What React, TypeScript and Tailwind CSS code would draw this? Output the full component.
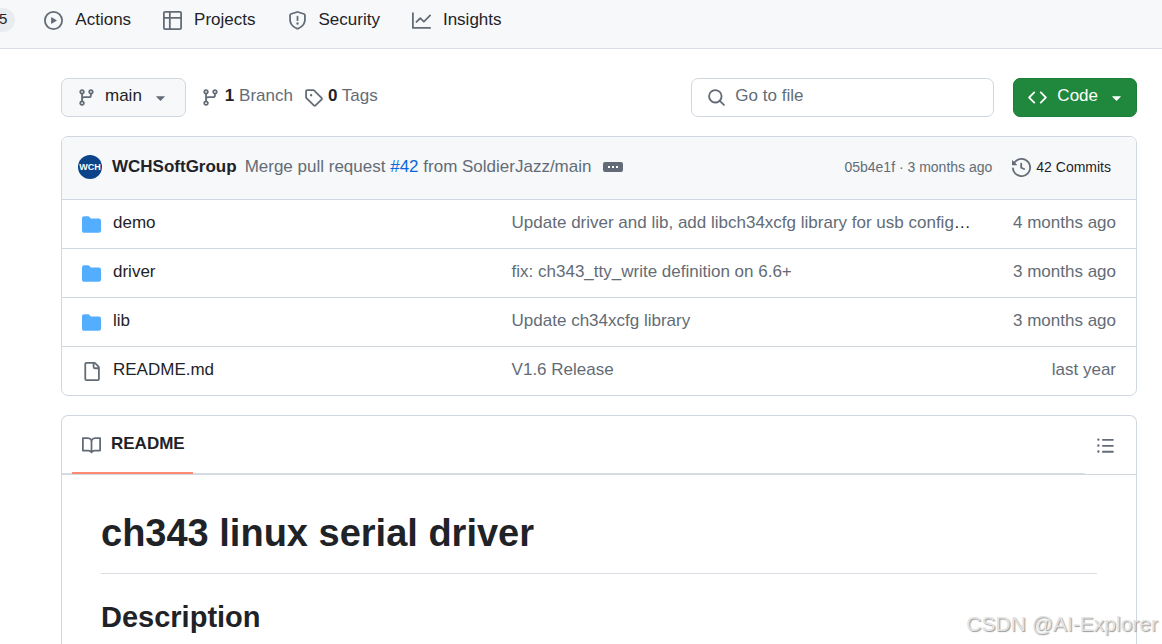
import clsx from 'clsx'

const paths = {
  play: 'M8 0a8 8 0 1 1 0 16A8 8 0 0 1 8 0ZM1.5 8a6.5 6.5 0 1 0 13 0 6.5 6.5 0 0 0-13 0Zm4.879-2.773 4.264 2.559a.25.25 0 0 1 0 .428l-4.264 2.559A.25.25 0 0 1 6 10.559V5.442a.25.25 0 0 1 .379-.215Z',
  table: 'M0 1.75C0 .784.784 0 1.75 0h12.5C15.216 0 16 .784 16 1.75v12.5A1.75 1.75 0 0 1 14.25 16H1.75A1.75 1.75 0 0 1 0 14.25ZM6.5 6.5v8h7.75a.25.25 0 0 0 .25-.25V6.5Zm8-1.5V1.75a.25.25 0 0 0-.25-.25H6.5V5Zm-13 1.5v7.75c0 .138.112.25.25.25H5v-8ZM5 5V1.5H1.75a.25.25 0 0 0-.25.25V5Z',
  shield: 'M7.467.133a1.748 1.748 0 0 1 1.066 0l5.25 1.68A1.75 1.75 0 0 1 15 3.48V7c0 1.566-.32 3.182-1.303 4.682-.983 1.498-2.585 2.813-5.032 3.855a1.697 1.697 0 0 1-1.33 0c-2.447-1.042-4.049-2.357-5.032-3.855C1.32 10.182 1 8.566 1 7V3.48a1.75 1.75 0 0 1 1.217-1.667Zm.61 1.429a.25.25 0 0 0-.153 0l-5.25 1.68a.25.25 0 0 0-.174.238V7c0 1.358.275 2.666 1.057 3.86.784 1.194 2.121 2.34 4.366 3.297a.196.196 0 0 0 .154 0c2.245-.956 3.582-2.104 4.366-3.298C13.225 9.666 13.5 8.36 13.5 7V3.48a.251.251 0 0 0-.174-.237l-5.25-1.68ZM8.75 4.75v3a.75.75 0 0 1-1.5 0v-3a.75.75 0 0 1 1.5 0ZM9 10.5a1 1 0 1 1-2 0 1 1 0 0 1 2 0Z',
  graph: 'M1.5 1.75V13.5h13.75a.75.75 0 0 1 0 1.5H.75a.75.75 0 0 1-.75-.75V1.75a.75.75 0 0 1 1.5 0Zm14.28 2.53-5.25 5.25a.75.75 0 0 1-1.06 0L7 7.06 4.28 9.78a.751.751 0 0 1-1.042-.018.751.751 0 0 1-.018-1.042l3.25-3.25a.75.75 0 0 1 1.06 0L10 7.94l4.72-4.72a.751.751 0 0 1 1.042.018.751.751 0 0 1 .018 1.042Z',
  branch: 'M9.5 3.25a2.25 2.25 0 1 1 3 2.122V6A2.5 2.5 0 0 1 10 8.5H6a1 1 0 0 0-1 1v1.128a2.251 2.251 0 1 1-1.5 0V5.372a2.25 2.25 0 1 1 1.5 0v1.836A2.493 2.493 0 0 1 6 7h4a1 1 0 0 0 1-1v-.628A2.25 2.25 0 0 1 9.5 3.25Zm-6 0a.75.75 0 1 0 1.5 0 .75.75 0 0 0-1.5 0Zm8.25-.75a.75.75 0 1 0 0 1.5.75.75 0 0 0 0-1.5ZM4.25 12a.75.75 0 1 0 0 1.5.75.75 0 0 0 0-1.5Z',
  triangle: 'm4.427 7.427 3.396 3.396a.25.25 0 0 0 .354 0l3.396-3.396A.25.25 0 0 0 11.396 7H4.604a.25.25 0 0 0-.177.427Z',
  tag: 'M1 7.775V2.75C1 1.784 1.784 1 2.75 1h5.025c.464 0 .91.184 1.238.513l6.25 6.25a1.75 1.75 0 0 1 0 2.474l-5.026 5.026a1.75 1.75 0 0 1-2.474 0l-6.25-6.25A1.752 1.752 0 0 1 1 7.775Zm1.5 0c0 .066.026.13.073.177l6.25 6.25a.25.25 0 0 0 .354 0l5.025-5.025a.25.25 0 0 0 0-.354l-6.25-6.25a.25.25 0 0 0-.177-.073H2.75a.25.25 0 0 0-.25.25ZM6 5a1 1 0 1 1 0 2 1 1 0 0 1 0-2Z',
  search: 'M10.68 11.74a6 6 0 0 1-7.922-8.982 6 6 0 0 1 8.982 7.922l3.04 3.04a.749.749 0 0 1-.326 1.275.749.749 0 0 1-.734-.215ZM11.5 7a4.499 4.499 0 1 0-8.997 0A4.499 4.499 0 0 0 11.5 7Z',
  code: 'm11.28 3.22 4.25 4.25a.75.75 0 0 1 0 1.06l-4.25 4.25a.749.749 0 0 1-1.275-.326.749.749 0 0 1 .215-.734L13.94 8l-3.72-3.72a.749.749 0 0 1 .326-1.275.749.749 0 0 1 .734.215Zm-6.56 0a.751.751 0 0 1 1.042.018.751.751 0 0 1 .018 1.042L2.06 8l3.72 3.72a.749.749 0 0 1-.326 1.275.749.749 0 0 1-.734-.215L.47 8.53a.75.75 0 0 1 0-1.06Z',
  history: 'm.427 1.927 1.215 1.215a8.002 8.002 0 1 1-1.6 5.685.75.75 0 1 1 1.493-.154 6.5 6.5 0 1 0 1.18-4.458l1.358 1.358A.25.25 0 0 1 3.896 6H.25A.25.25 0 0 1 0 5.75V2.104a.25.25 0 0 1 .427-.177ZM7.75 4a.75.75 0 0 1 .75.75v2.992l2.028.812a.75.75 0 0 1-.557 1.392l-2.5-1A.751.751 0 0 1 7 8.25v-3.5A.75.75 0 0 1 7.75 4Z',
  folder: 'M1.75 1A1.75 1.75 0 0 0 0 2.75v10.5C0 14.216.784 15 1.75 15h12.5A1.75 1.75 0 0 0 16 13.25v-8.5A1.75 1.75 0 0 0 14.25 3H7.5a.25.25 0 0 1-.2-.1l-.9-1.2C6.07 1.26 5.55 1 5 1H1.75Z',
  file: 'M2 1.75C2 .784 2.784 0 3.75 0h6.586c.464 0 .909.184 1.237.513l2.914 2.914c.329.328.513.773.513 1.237v9.586A1.75 1.75 0 0 1 13.25 16h-9.5A1.75 1.75 0 0 1 2 14.25Zm1.75-.25a.25.25 0 0 0-.25.25v12.5c0 .138.112.25.25.25h9.5a.25.25 0 0 0 .25-.25V6h-2.75A1.75 1.75 0 0 1 9 4.25V1.5Zm6.75.062V4.25c0 .138.112.25.25.25h2.688l-.011-.013-2.914-2.914-.013-.011Z',
  book: 'M0 1.75A.75.75 0 0 1 .75 1h4.253c1.227 0 2.317.59 3 1.501A3.743 3.743 0 0 1 11.006 1h4.245a.75.75 0 0 1 .75.75v10.5a.75.75 0 0 1-.75.75h-4.507a2.25 2.25 0 0 0-1.591.659l-.622.621a.75.75 0 0 1-1.06 0l-.622-.621A2.25 2.25 0 0 0 5.258 13H.75a.75.75 0 0 1-.75-.75Zm7.251 10.324.004-5.073-.002-2.253A2.25 2.25 0 0 0 5.003 2.5H1.5v9h3.757a3.75 3.75 0 0 1 1.994.574ZM8.755 4.75l-.004 7.322a3.752 3.752 0 0 1 1.992-.572H14.5v-9h-3.495a2.25 2.25 0 0 0-2.25 2.25Z',
  list: 'M5.75 2.5h8.5a.75.75 0 0 1 0 1.5h-8.5a.75.75 0 0 1 0-1.5Zm0 5h8.5a.75.75 0 0 1 0 1.5h-8.5a.75.75 0 0 1 0-1.5Zm0 5h8.5a.75.75 0 0 1 0 1.5h-8.5a.75.75 0 0 1 0-1.5ZM2 14a1 1 0 1 1 0-2 1 1 0 0 1 0 2Zm1-6a1 1 0 1 1-2 0 1 1 0 0 1 2 0ZM2 4a1 1 0 1 1 0-2 1 1 0 0 1 0 2Z',
}

type IconName = keyof typeof paths

function Icon({ name, className }: { name: IconName; className?: string }) {
  return (
    <svg
      viewBox="0 0 16 16"
      aria-hidden="true"
      className={clsx('size-[19px] shrink-0 fill-current', className ?? 'text-[#636c76]')}
    >
      <path d={paths[name]} />
    </svg>
  )
}

const tabs: { label: string; icon: IconName }[] = [
  { label: 'Actions', icon: 'play' },
  { label: 'Projects', icon: 'table' },
  { label: 'Security', icon: 'shield' },
  { label: 'Insights', icon: 'graph' },
]

const files = [
  {
    name: 'demo',
    folder: true,
    message: 'Update driver and lib, add libch34xcfg library for usb config',
    cut: true,
    age: '4 months ago',
  },
  { name: 'driver', folder: true, message: 'fix: ch343_tty_write definition on 6.6+', age: '3 months ago' },
  { name: 'lib', folder: true, message: 'Update ch34xcfg library', age: '3 months ago' },
  { name: 'README.md', folder: false, message: 'V1.6 Release', age: 'last year' },
]

function RepoNav() {
  return (
    <nav className="flex h-[49px] shrink-0 items-start border-b border-[#d8dee4] bg-[#f6f8fa] pt-2">
      <span className="-ml-[9px] flex h-6 items-center rounded-full bg-[#e8ebef] px-2 pb-0.5 text-[15px]">5</span>
      <ul className="ml-[29px] flex h-6 items-center gap-8">
        {tabs.map((tab) => (
          <li key={tab.label}>
            <a href="#" className="flex items-center gap-3">
              <Icon name={tab.icon} />
              <span>{tab.label}</span>
            </a>
          </li>
        ))}
      </ul>
    </nav>
  )
}

function Toolbar() {
  return (
    <div className="flex h-[39px] shrink-0 items-center">
      <button className="flex h-full items-center rounded-[7px] border border-[#d0d7de] bg-[#f6f8fa] pr-[15px] pl-[15px]">
        <Icon name="branch" />
        <span className="ml-[9px] pb-1">main</span>
        <Icon name="triangle" className="ml-[9px] text-[#636c76]" />
      </button>
      <a href="#" className="ml-[15px] flex items-center gap-[5px]">
        <Icon name="branch" />
        <span className="pb-1 text-[#636c76]">
          <strong className="text-[#1f2328]">1</strong> Branch
        </span>
      </a>
      <a href="#" className="ml-[11px] flex items-center gap-[5px]">
        <Icon name="tag" />
        <span className="pb-1 text-[#636c76]">
          <strong className="text-[#1f2328]">0</strong> Tags
        </span>
      </a>
      <label className="ml-auto flex h-full w-[303px] items-center gap-[9px] rounded-[7px] border border-[#d0d7de] pl-[15px]">
        <Icon name="search" />
        <input
          type="text"
          aria-label="Go to file"
          placeholder="Go to file"
          className="min-w-0 flex-1 bg-transparent pb-1 outline-none placeholder:text-[#636c76]"
        />
      </label>
      <button className="ml-[19px] flex h-full items-center rounded-[7px] border border-[#1c7d37] bg-[#1f883d] pr-[10px] pl-[14px] text-white">
        <Icon name="code" className="text-white" />
        <span className="ml-[10px] pb-1">Code</span>
        <Icon name="triangle" className="ml-[9px] text-white" />
      </button>
    </div>
  )
}

function Avatar() {
  return (
    <svg viewBox="0 0 24 24" className="size-6 shrink-0" role="img" aria-label="WCHSoftGroup">
      <circle cx="12" cy="12" r="12" fill="#0b4489" />
      <text
        x="12"
        y="15"
        textAnchor="middle"
        fill="#fff"
        fontFamily="Liberation Sans, sans-serif"
        fontSize="9"
        fontWeight="bold"
      >
        WCH
      </text>
    </svg>
  )
}

function FileList() {
  return (
    <section className="mt-[19px] shrink-0 overflow-hidden rounded-[7px] border border-[#d0d7de]">
      <div className="flex h-[62px] items-center bg-[#f6f8fa] pr-[25px] pb-0.5 pl-4">
        <Avatar />
        <a href="#" className="ml-[10px] font-bold">
          WCHSoftGroup
        </a>
        <p className="ml-2 whitespace-nowrap text-[#636c76]">
          Merge pull request{' '}
          <a href="#" className="text-[#0969da]">
            #42
          </a>{' '}
          from SoldierJazz/main
        </p>
        <button
          aria-label="Show commit details"
          className="ml-3 flex h-[10px] w-5 items-center justify-center gap-[2px] rounded-[2px] bg-[#636c76]"
        >
          <span className="size-[2px] bg-white" />
          <span className="size-[2px] bg-white" />
          <span className="size-[2px] bg-white" />
        </button>
        <span className="ml-auto text-sm text-[#636c76]">05b4e1f · 3 months ago</span>
        <a href="#" className="ml-5 flex items-center gap-[5px] text-sm">
          <Icon name="history" />
          <span>42 Commits</span>
        </a>
      </div>
      <table className="w-full table-fixed border-separate border-spacing-0">
        <tbody>
          {files.map((file) => (
            <tr key={file.name} className="h-[49px]">
              <td className="w-[40%] border-t border-[#d0d7de] pl-5">
                <a href="#" className="flex items-center gap-3">
                  <Icon
                    name={file.folder ? 'folder' : 'file'}
                    className={file.folder ? 'text-[#54aeff]' : 'text-[#636c76]'}
                  />
                  <span className="pb-0.5">{file.name}</span>
                </a>
              </td>
              <td className="border-t border-[#d0d7de] pb-0.5 pl-5 whitespace-nowrap">
                <a href="#" className="text-[#636c76]">
                  {file.message}
                </a>
                {file.cut && '…'}
              </td>
              <td className="w-[150px] border-t border-[#d0d7de] pr-5 pb-0.5 text-right text-[#636c76]">
                {file.age}
              </td>
            </tr>
          ))}
        </tbody>
      </table>
    </section>
  )
}

function Readme() {
  return (
    <section className="mt-[19px] flex-1 rounded-t-[7px] border border-b-0 border-[#d0d7de]">
      <div className="flex h-[59px] border-b border-[#d0d7de]">
        <div className="flex flex-1 border-b border-[#d8dee4] pl-[10px]">
          <a
            href="#"
            className="-mb-px flex items-center gap-[10px] border-b-2 border-[#fd8c73] pt-0.5 pr-2 pl-[10px] font-bold"
          >
            <Icon name="book" />
            <span className="pb-0.5">README</span>
          </a>
        </div>
        <button aria-label="Outline" className="mr-[11px] flex w-10 items-center justify-center">
          <Icon name="list" />
        </button>
      </div>
      <article className="px-[39px] pt-[34px]">
        <h1 className="border-b border-[#d8dee4] pb-4 text-[38px] leading-[48px] font-bold">
          ch343 linux serial driver
        </h1>
        <h2 className="mt-[25px] text-[29px] leading-9 font-bold">Description</h2>
      </article>
    </section>
  )
}

export default function App() {
  return (
    <div className="relative flex h-screen flex-col overflow-hidden bg-white font-['Liberation_Sans',Arial,sans-serif] text-[17px] leading-6 text-[#1f2328]">
      <RepoNav />
      <main className="flex flex-1 flex-col pt-[29px] pr-[25px] pl-[61px]">
        <Toolbar />
        <FileList />
        <Readme />
      </main>
      <span className="absolute right-1 bottom-2 text-[21px] text-[#e2e2e2] [text-shadow:1px_1px_1px_#999]">
        CSDN @AI-Explorer
      </span>
    </div>
  )
}
